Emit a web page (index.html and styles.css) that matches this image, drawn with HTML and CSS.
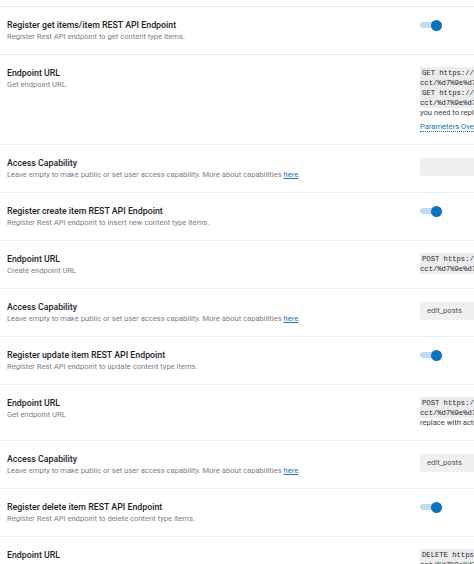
FILE: index.html
```html
<!DOCTYPE html>
<html lang="en">
<head>
<meta charset="utf-8">
<title>REST API Endpoints</title>
<link rel="stylesheet" href="styles.css">
</head>
<body>
<div class="settings">
  <div class="row">
    <div class="label">
      <div class="title">Register get items/item REST API Endpoint</div>
      <div class="desc">Register Rest API endpoint to get content type items.</div>
    </div>
    <div class="control">
      <span class="switch"><span class="track"></span><span class="knob"></span></span>
    </div>
  </div>

  <div class="row">
    <div class="label">
      <div class="title">Endpoint URL</div>
      <div class="desc">Get endpoint URL</div>
    </div>
    <div class="control">
      <div class="code-line"><code class="code">GET https://example.com/wp-json/jet-<br>cct/%d7%9e%d7%95%d7%a6%d7%a8%d7%99%d7%9d/</code></div>
      <div class="code-line"><code class="code">GET https://example.com/wp-json/jet-<br>cct/%d7%9e%d7%95%d7%a6%d7%a8%d7%99%d7%9d/{_ID}</code></div>
      <div class="note">you need to replace {_ID} with actual item ID</div>
      <div class="params"><a href="#" class="dotted">Parameters Overview</a></div>
    </div>
  </div>

  <div class="row">
    <div class="label">
      <div class="title">Access Capability</div>
      <div class="desc">Leave empty to make public or set user access capability. More about capabilities <a href="#" class="link">here</a>.</div>
    </div>
    <div class="control">
      <div class="input"></div>
    </div>
  </div>

  <div class="row">
    <div class="label">
      <div class="title">Register create item REST API Endpoint</div>
      <div class="desc">Register Rest API endpoint to insert new content type items.</div>
    </div>
    <div class="control">
      <span class="switch"><span class="track"></span><span class="knob"></span></span>
    </div>
  </div>

  <div class="row">
    <div class="label">
      <div class="title">Endpoint URL</div>
      <div class="desc">Create endpoint URL</div>
    </div>
    <div class="control">
      <div class="code-line"><code class="code">POST https://example.com/wp-json/jet-<br>cct/%d7%9e%d7%95%d7%a6%d7%a8%d7%99%d7%9d/</code></div>
    </div>
  </div>

  <div class="row">
    <div class="label">
      <div class="title">Access Capability</div>
      <div class="desc">Leave empty to make public or set user access capability. More about capabilities <a href="#" class="link">here</a>.</div>
    </div>
    <div class="control">
      <div class="input">edit_posts</div>
    </div>
  </div>

  <div class="row">
    <div class="label">
      <div class="title">Register update item REST API Endpoint</div>
      <div class="desc">Register Rest API endpoint to update content type items.</div>
    </div>
    <div class="control">
      <span class="switch"><span class="track"></span><span class="knob"></span></span>
    </div>
  </div>

  <div class="row">
    <div class="label">
      <div class="title">Endpoint URL</div>
      <div class="desc">Get endpoint URL</div>
    </div>
    <div class="control">
      <div class="code-line"><code class="code">POST https://example.com/wp-json/jet-<br>cct/%d7%9e%d7%95%d7%a6%d7%a8%d7%99%d7%9d/{_ID}</code></div>
      <div class="note">replace with actual item ID</div>
    </div>
  </div>

  <div class="row">
    <div class="label">
      <div class="title">Access Capability</div>
      <div class="desc">Leave empty to make public or set user access capability. More about capabilities <a href="#" class="link">here</a>.</div>
    </div>
    <div class="control">
      <div class="input">edit_posts</div>
    </div>
  </div>

  <div class="row">
    <div class="label">
      <div class="title">Register delete item REST API Endpoint</div>
      <div class="desc">Register Rest API endpoint to delete content type items.</div>
    </div>
    <div class="control">
      <span class="switch"><span class="track"></span><span class="knob"></span></span>
    </div>
  </div>

  <div class="row">
    <div class="label">
      <div class="title">Endpoint URL</div>
      <div class="desc">Get endpoint URL</div>
    </div>
    <div class="control">
      <div class="code-line"><code class="code">DELETE https://example.com/wp-json/jet-<br>cct/%d7%9e%d7%95%d7%a6%d7%a8%d7%99%d7%9d/{_ID}</code></div>
      <div class="note">replace with actual item ID</div>
    </div>
  </div>
</div>
</body>
</html>
```

FILE: styles.css
```css
html, body {
  margin: 0;
  padding: 0;
  background: #ffffff;
  overflow: hidden;
}

body {
  font-family: Roboto, "Liberation Sans", Arial, sans-serif;
  color: #1e1e1e;
}

.settings {
  width: 760px;
  padding-top: 6px;
}

.row {
  display: grid;
  grid-template-columns: 413px 340px;
  align-items: start;
  padding: 12px 0 12px 7px;
  border-top: 1px solid #ededed;
}

.title {
  font-size: 8.8px;
  line-height: 12px;
  font-weight: 500;
  color: #1d2327;
  white-space: nowrap;
}

.desc {
  font-size: 7.6px;
  line-height: 11px;
  color: #808080;
  white-space: nowrap;
}

.link {
  color: #2271b1;
  text-decoration: underline;
}

.control {
  font-size: 7.6px;
  line-height: 10px;
  white-space: nowrap;
}

.switch {
  display: flex;
  align-items: center;
  height: 12px;
}

.track {
  width: 20px;
  height: 6px;
  border-radius: 3px;
  background: #c4dbee;
}

.knob {
  width: 11px;
  height: 11px;
  border-radius: 50%;
  background: #0b73bd;
  margin-left: -9px;
}

.code {
  font-family: "Liberation Mono", "DejaVu Sans Mono", monospace;
  font-size: 7.2px;
  line-height: 10px;
  color: #23282d;
  background: #ececec;
  padding: 1.5px 2px;
}

.note {
  margin-top: 1px;
  color: #3c434a;
}

.params {
  margin-top: 4px;
}

.dotted {
  color: #2271b1;
  text-decoration: none;
  border-bottom: 1px dotted #2271b1;
}

.input {
  margin-top: 1px;
  width: 200px;
  height: 18px;
  line-height: 18px;
  padding-left: 7px;
  border-radius: 2px;
  background: #f0f0f1;
  color: #50575e;
  font-size: 7.6px;
}
```
